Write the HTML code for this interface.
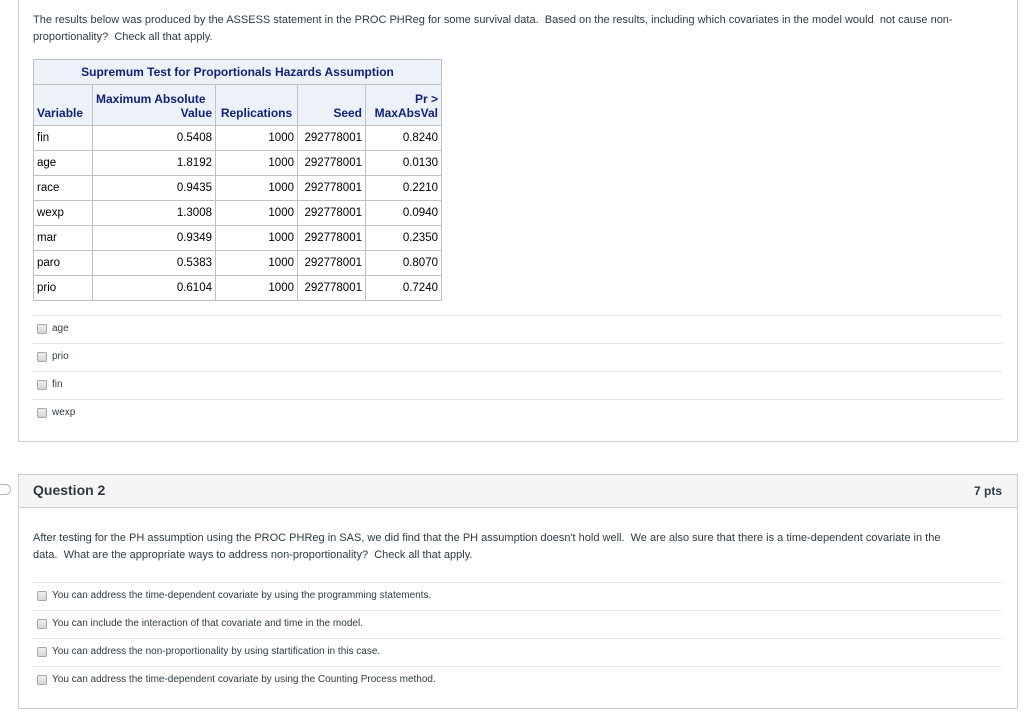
<!DOCTYPE html>
<html><head><style>
*{margin:0;padding:0;box-sizing:border-box}
body{width:1024px;height:717px;background:#fff;font-family:"Liberation Sans",sans-serif;color:#2d3b45;position:relative;overflow:hidden}
.box{position:absolute;left:18px;width:1000px;border:1px solid #c7cdd1}
.t{position:absolute;left:33px;font-size:11px;line-height:17px;color:#2d3b45}
.ans{position:absolute;left:33px;width:969px;height:28px;border-top:1px solid #e3e6e8;font-size:10px;color:#2d3b45}
.ans span.cb{position:absolute;left:4px;top:8px;width:10px;height:10px;border:1px solid #a8a8a8;border-radius:2px;background:linear-gradient(#eee,#d6d6d6)}
.ans span.l{position:absolute;left:19px;top:7px}
table{position:absolute;left:33px;top:59px;border-collapse:collapse;font-size:11.5px;color:#000;width:409px}
td,th{border:1px solid #c1c1c1;padding:0 3px}
th{background:#edf2f9;color:#112277;font-weight:bold;font-size:12px;line-height:14px}
td{height:25px;background:#fff}
td.r{text-align:right}
</style></head><body>
<div class="box" style="top:-2px;height:444px;border-top:none"></div>
<div class="t" style="top:12px;width:960px">The results below was produced by the ASSESS statement in the PROC PHReg for some survival data.&nbsp; Based on the results, including which covariates in the model would&nbsp; not cause non-proportionality?&nbsp; Check all that apply.</div>
<table>
<tr><th colspan="5" style="height:25px">Supremum Test for Proportionals Hazards Assumption</th></tr>
<tr style="height:41px"><th style="text-align:left;vertical-align:bottom;width:59px;padding-bottom:5px">Variable</th><th style="text-align:right;vertical-align:bottom;width:123px;padding-bottom:5px"><div style="text-align:left">Maximum Absolute</div>Value</th><th style="vertical-align:bottom;width:82px;padding-bottom:5px">Replications</th><th style="text-align:right;vertical-align:bottom;width:68px;padding-bottom:5px">Seed</th><th style="text-align:right;vertical-align:bottom;width:76px;padding-bottom:5px">Pr &gt;<br>MaxAbsVal</th></tr>
<tr><td>fin</td><td class="r">0.5408</td><td class="r">1000</td><td class="r">292778001</td><td class="r">0.8240</td></tr>
<tr><td>age</td><td class="r">1.8192</td><td class="r">1000</td><td class="r">292778001</td><td class="r">0.0130</td></tr>
<tr><td>race</td><td class="r">0.9435</td><td class="r">1000</td><td class="r">292778001</td><td class="r">0.2210</td></tr>
<tr><td>wexp</td><td class="r">1.3008</td><td class="r">1000</td><td class="r">292778001</td><td class="r">0.0940</td></tr>
<tr><td>mar</td><td class="r">0.9349</td><td class="r">1000</td><td class="r">292778001</td><td class="r">0.2350</td></tr>
<tr><td>paro</td><td class="r">0.5383</td><td class="r">1000</td><td class="r">292778001</td><td class="r">0.8070</td></tr>
<tr><td>prio</td><td class="r">0.6104</td><td class="r">1000</td><td class="r">292778001</td><td class="r">0.7240</td></tr>
</table>
<div class="ans" style="top:315px"><span class="cb"></span><span class="l">age</span></div>
<div class="ans" style="top:343px"><span class="cb"></span><span class="l">prio</span></div>
<div class="ans" style="top:371px"><span class="cb"></span><span class="l">fin</span></div>
<div class="ans" style="top:399px"><span class="cb"></span><span class="l">wexp</span></div>

<div style="position:absolute;left:-6px;top:484px;width:17px;height:11px;border:1px solid #b0b7bc;border-radius:0 6px 6px 0"></div>
<div class="box" style="top:474px;height:235px"></div>
<div style="position:absolute;left:19px;top:475px;width:998px;height:33px;background:#f5f5f5;border-bottom:1px solid #c7cdd1"></div>
<div style="position:absolute;left:33px;top:482px;font-size:14px;font-weight:bold;color:#2d3b45">Question 2</div>
<div style="position:absolute;right:22px;top:484px;font-size:12px;font-weight:bold;color:#2d3b45">7 pts</div>
<div class="t" style="top:530px;width:935px">After testing for the PH assumption using the PROC PHReg in SAS, we did find that the PH assumption doesn't hold well.&nbsp; We are also sure that there is a time-dependent covariate in the data.&nbsp; What are the appropriate ways to address non-proportionality?&nbsp; Check all that apply.</div>
<div class="ans" style="top:582px"><span class="cb"></span><span class="l">You can address the time-dependent covariate by using the programming statements.</span></div>
<div class="ans" style="top:610px"><span class="cb"></span><span class="l">You can include the interaction of that covariate and time in the model.</span></div>
<div class="ans" style="top:638px"><span class="cb"></span><span class="l">You can address the non-proportionality by using startification in this case.</span></div>
<div class="ans" style="top:666px"><span class="cb"></span><span class="l">You can address the time-dependent covariate by using the Counting Process method.</span></div>
</body></html>
